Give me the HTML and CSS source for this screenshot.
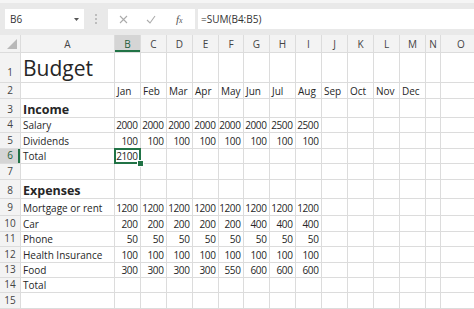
FILE: index.html
```html
<!DOCTYPE html>
<html lang="en">

<head>
    <meta charset="UTF-8">
    <meta name="viewport" content="width=device-width, initial-scale=1.0">
    <title>Budget</title>
    <link rel="stylesheet" href="styles.css">
</head>

<body>
    <div class="formula-bar">
        <div class="name-box">
            <span>B6</span>
            <svg class="drop" width="5" height="3" viewBox="0 0 5 3"><polygon points="0,0 5,0 2.5,3" fill="#555"/></svg>
        </div>
        <div class="grip"><span></span></div>
        <div class="fx-box">
            <svg class="icon" width="9" height="9" viewBox="0 0 9 9"><path d="M1 1L8 8M8 1L1 8" stroke="#ababab" stroke-width="1.1" fill="none"/></svg>
            <svg class="icon check" width="10" height="9" viewBox="0 0 10 9"><path d="M1 5L4 8L9 1" stroke="#ababab" stroke-width="1.1" fill="none"/></svg>
            <span class="fx">f<small>x</small></span>
        </div>
        <div class="formula">=SUM(B4:B5)</div>
    </div>

    <div class="sheet">
        <div class="corner"><svg width="20" height="17" viewBox="0 0 20 17"><polygon points="17,4 17,14 7,14" fill="#b9b9b9"/></svg></div>
        <div class="hd">A</div><div class="hd sel-col">B</div><div class="hd">C</div><div class="hd">D</div><div class="hd">E</div><div class="hd">F</div><div class="hd">G</div><div class="hd">H</div><div class="hd">I</div><div class="hd">J</div><div class="hd">K</div><div class="hd">L</div><div class="hd">M</div><div class="hd">N</div><div class="hd">O</div>

        <div class="rn first">1</div><div class="title">Budget</div>
        <div></div><div></div><div></div><div></div><div></div><div></div><div></div><div></div><div></div><div></div><div></div><div></div><div></div><div></div>

        <div class="rn">2</div><div></div>
        <div>Jan</div><div>Feb</div><div>Mar</div><div>Apr</div><div>May</div><div>Jun</div><div>Jul</div><div>Aug</div><div>Sep</div><div>Oct</div><div>Nov</div><div>Dec</div><div></div><div></div>

        <div class="rn">3</div><div class="group">Income</div>
        <div></div><div></div><div></div><div></div><div></div><div></div><div></div><div></div><div></div><div></div><div></div><div></div><div></div><div></div>

        <div class="rn">4</div><div>Salary</div>
        <div class="n">2000</div><div class="n">2000</div><div class="n">2000</div><div class="n">2000</div><div class="n">2000</div><div class="n">2000</div><div class="n">2500</div><div class="n">2500</div>
        <div></div><div></div><div></div><div></div><div></div><div></div>

        <div class="rn">5</div><div>Dividends</div>
        <div class="n">100</div><div class="n">100</div><div class="n">100</div><div class="n">100</div><div class="n">100</div><div class="n">100</div><div class="n">100</div><div class="n">100</div>
        <div></div><div></div><div></div><div></div><div></div><div></div>

        <div class="rn sel-row">6</div><div>Total</div>
        <div class="n active">2100</div>
        <div></div><div></div><div></div><div></div><div></div><div></div><div></div><div></div><div></div><div></div><div></div><div></div><div></div>

        <div class="rn">7</div>
        <div></div><div></div><div></div><div></div><div></div><div></div><div></div><div></div><div></div><div></div><div></div><div></div><div></div><div></div><div></div>

        <div class="rn">8</div><div class="group">Expenses</div>
        <div></div><div></div><div></div><div></div><div></div><div></div><div></div><div></div><div></div><div></div><div></div><div></div><div></div><div></div>

        <div class="rn">9</div><div>Mortgage or rent</div>
        <div class="n">1200</div><div class="n">1200</div><div class="n">1200</div><div class="n">1200</div><div class="n">1200</div><div class="n">1200</div><div class="n">1200</div><div class="n">1200</div>
        <div></div><div></div><div></div><div></div><div></div><div></div>

        <div class="rn">10</div><div>Car</div>
        <div class="n">200</div><div class="n">200</div><div class="n">200</div><div class="n">200</div><div class="n">200</div><div class="n">400</div><div class="n">400</div><div class="n">400</div>
        <div></div><div></div><div></div><div></div><div></div><div></div>

        <div class="rn">11</div><div>Phone</div>
        <div class="n">50</div><div class="n">50</div><div class="n">50</div><div class="n">50</div><div class="n">50</div><div class="n">50</div><div class="n">50</div><div class="n">50</div>
        <div></div><div></div><div></div><div></div><div></div><div></div>

        <div class="rn">12</div><div>Health Insurance</div>
        <div class="n">100</div><div class="n">100</div><div class="n">100</div><div class="n">100</div><div class="n">100</div><div class="n">100</div><div class="n">100</div><div class="n">100</div>
        <div></div><div></div><div></div><div></div><div></div><div></div>

        <div class="rn">13</div><div>Food</div>
        <div class="n">300</div><div class="n">300</div><div class="n">300</div><div class="n">300</div><div class="n">550</div><div class="n">600</div><div class="n">600</div><div class="n">600</div>
        <div></div><div></div><div></div><div></div><div></div><div></div>

        <div class="rn">14</div><div>Total</div>
        <div></div><div></div><div></div><div></div><div></div><div></div><div></div><div></div><div></div><div></div><div></div><div></div><div></div><div></div>

        <div class="rn">15</div>
        <div></div><div></div><div></div><div></div><div></div><div></div><div></div><div></div><div></div><div></div><div></div><div></div><div></div><div></div><div></div>
    </div>
</body>

</html>
```

FILE: styles.css
```css
* {
    margin: 0;
    padding: 0;
    box-sizing: border-box;
}

body {
    width: 474px;
    height: 309px;
    overflow: hidden;
    background-color: #fff;
    font-family: "Open Sans", sans-serif;
    color: #262626;
}

/* formula bar */
.formula-bar {
    height: 35px;
    display: flex;
    align-items: flex-start;
    padding: 6px 0 0 5px;
    background-color: #e9e9e9;
    border-top: 3px solid #f5f5f5;
}

.name-box {
    width: 79px;
    height: 20px;
    display: flex;
    align-items: center;
    justify-content: space-between;
    padding: 0 5px;
    background-color: #fff;
    font-size: 10px;
    color: #333;
}

.grip {
    width: 24px;
    height: 20px;
    display: flex;
    justify-content: center;
    align-items: center;
}

.grip span {
    width: 2px;
    height: 10px;
    border-left: 2px dotted #bdbdbd;
}

.fx-box {
    width: 87px;
    height: 20px;
    display: flex;
    align-items: center;
    padding-left: 11px;
    background-color: #fff;
}

.fx-box .check {
    margin-left: 18px;
}

.fx {
    margin-left: 20px;
    font-family: "Liberation Serif", serif;
    font-style: italic;
    font-size: 11px;
    color: #555;
}

.fx small {
    font-size: 8px;
}

.formula {
    flex: 1;
    height: 20px;
    margin-left: 3px;
    padding-left: 3px;
    display: flex;
    align-items: center;
    background-color: #fff;
    font-size: 10px;
    color: #333;
}

/* grid */
.sheet {
    display: grid;
    grid-template-columns: 20px 93px 25px 25px 25px 25px 24px 25px 25px 25px 25px 25px 25px 25px 14px 40px;
    grid-template-rows: 17px 29px 15px 18px 14px 15px 14px 15px 18px 16px 15px 14px 15px 14px 14px 15px;
    gap: 1px;
    padding-bottom: 1px;
    background-color: #dcdcdc;
    font-size: 10px;
}

.sheet > div {
    display: flex;
    align-items: flex-end;
    padding: 0 2px;
    line-height: 13px;
    white-space: nowrap;
    background-color: #fff;
}

.sheet > .n {
    justify-content: flex-end;
    letter-spacing: -0.4px;
    padding-right: 2.5px;
}

.sheet > .corner {
    padding: 0;
    background-color: #f3f3f3;
}

.sheet > .hd {
    justify-content: center;
    align-items: center;
    padding-top: 1px;
    background-color: #f3f3f3;
    color: #444;
}

.sheet > .rn {
    justify-content: center;
    line-height: 15px;
    padding: 0;
    background-color: #f3f3f3;
    color: #444;
}

.sheet > .rn.first {
    padding-bottom: 2px;
}

.sheet > .sel-col {
    background-color: #d5d5d5;
    color: #1d5e39;
    box-shadow: inset 0 -2px 0 #217346;
}

.sheet > .sel-row {
    background-color: #d5d5d5;
    color: #1d5e39;
    box-shadow: inset -2px 0 0 #217346;
}

.sheet > .title {
    font-size: 21px;
    line-height: 28px;
}

.sheet > .group {
    font-size: 12.5px;
    font-weight: bold;
    line-height: 15px;
}

.sheet > .active {
    position: relative;
    z-index: 1;
    outline: 2px solid #217346;
    outline-offset: -1px;
}

.sheet > .active::after {
    content: "";
    position: absolute;
    right: -4px;
    bottom: -4px;
    width: 5px;
    height: 5px;
    background-color: #217346;
    border: 1px solid #fff;
}
```
